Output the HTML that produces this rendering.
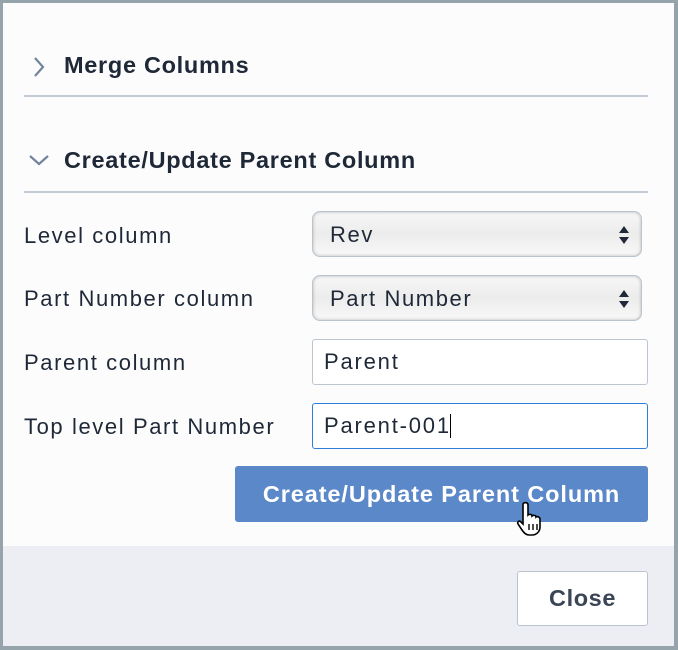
<!DOCTYPE html>
<html><head><style>
*{box-sizing:border-box;margin:0;padding:0}
body{width:678px;height:650px;background:#95a3ab;font-family:"Liberation Sans",sans-serif;color:#1f2837;position:relative;overflow:hidden}
.panel{position:absolute;left:3px;top:3px;width:671px;height:643px;background:#fcfcfd}
.foot{position:absolute;left:3px;top:546px;width:671px;height:100px;background:#edeef3}
.h{position:absolute;left:64px;font-size:23.5px;font-weight:bold;letter-spacing:0.7px;white-space:nowrap}
.hr{position:absolute;left:24px;width:624px;height:2px;background:#c2ccd6}
.lbl{position:absolute;left:24px;font-size:22px;letter-spacing:1.6px;white-space:nowrap}
.sel{position:absolute;left:312px;width:330px;height:46px;border:1px solid #b9c4cf;border-radius:8px;background:linear-gradient(#f7f7f7,#ececec 50%,#f8f8f8);box-shadow:inset 0 0 3px rgba(0,0,0,.25);font-size:22px;letter-spacing:1.6px;padding:10px 0 0 17px;white-space:nowrap}
.arr{position:absolute;right:12px;top:13px;width:10px}
.inp{position:absolute;left:312px;width:336px;height:46px;border:1px solid #bcc6d0;border-radius:3px;background:#fff;font-size:22px;letter-spacing:1.8px;padding:9px 0 0 11px;white-space:nowrap}
.btn{position:absolute;left:235px;top:466px;width:413px;height:56px;background:#5b88c9;border-radius:3px;color:#fff;font-weight:bold;font-size:23.5px;letter-spacing:0.9px;text-align:center;line-height:56px;white-space:nowrap}
.close{position:absolute;left:517px;top:571px;width:131px;height:55px;background:#fff;border:1px solid #b9c4cf;border-radius:3px;font-weight:bold;font-size:23.5px;letter-spacing:0.6px;color:#3a4556;text-align:center;line-height:53px}
</style></head><body>
<div class="panel"></div>
<div class="foot"></div>
<svg style="position:absolute;left:32px;top:56px" width="14" height="22"><path d="M3 2 L11 11 L3 20" stroke="#71849a" stroke-width="2.2" fill="none"/></svg>
<div class="h" style="top:52px">Merge Columns</div>
<div class="hr" style="top:95px"></div>
<svg style="position:absolute;left:28px;top:153px" width="22" height="14"><path d="M2 3 L11 11 L20 3" stroke="#71849a" stroke-width="2.2" fill="none"/></svg>
<div class="h" style="top:147px">Create/Update Parent Column</div>
<div class="hr" style="top:191px"></div>
<div class="lbl" style="top:223px">Level column</div>
<div class="lbl" style="top:286px">Part Number column</div>
<div class="lbl" style="top:350px">Parent column</div>
<div class="lbl" style="top:414px">Top level Part Number</div>
<div class="sel" style="top:211px">Rev<svg class="arr" width="10" height="20"><path d="M0 8L5 1L10 8Z M0 12L5 19L10 12Z" fill="#1f2837"/></svg></div>
<div class="sel" style="top:275px">Part Number<svg class="arr" width="10" height="20"><path d="M0 8L5 1L10 8Z M0 12L5 19L10 12Z" fill="#1f2837"/></svg></div>
<div class="inp" style="top:339px">Parent</div>
<div class="inp" style="top:403px;border:1.5px solid #2f7fd8">Parent-001<span style="display:inline-block;width:1.5px;height:24px;background:#000;vertical-align:-5px;margin-left:-1px"></span></div>
<div class="btn">Create/Update Parent Column</div>
<svg style="position:absolute;left:515px;top:500px" width="34" height="40"><path d="M9 3c2-1 4 0 4 2v10c1-1 4-1 4 1c1-1 4-1 4 1c1-1 4 0 4 2v8c0 4-3 8-8 8h-3c-3 0-5-2-7-5l-4-6c-1-2 1-4 3-2l2 2V5c0-1 0-2 1-2z" fill="#fff" stroke="#000" stroke-width="1.6"/><path d="M14 24v6M18 24v6M22 24v6" stroke="#000" stroke-width="1.4"/></svg>
<div class="close">Close</div>
</body></html>
